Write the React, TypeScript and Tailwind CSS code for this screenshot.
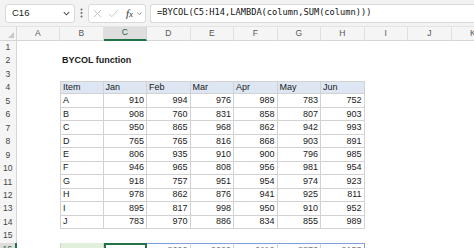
import React from 'react';

const COLS = ['A', 'B', 'C', 'D', 'E', 'F', 'G', 'H', 'I', 'J', 'K'];
const MONTHS = ['Jan', 'Feb', 'Mar', 'Apr', 'May', 'Jun'];
const DATA: [string, number[]][] = [
  ['A', [910, 994, 976, 989, 783, 752]],
  ['B', [908, 760, 831, 858, 807, 903]],
  ['C', [950, 865, 968, 862, 942, 993]],
  ['D', [765, 765, 816, 868, 903, 891]],
  ['E', [806, 935, 910, 900, 796, 985]],
  ['F', [946, 965, 808, 956, 981, 954]],
  ['G', [918, 757, 951, 954, 974, 923]],
  ['H', [978, 862, 876, 941, 925, 811]],
  ['I', [895, 817, 998, 950, 910, 952]],
  ['J', [783, 970, 886, 834, 855, 989]],
];
const TOTALS = [8859, 8690, 9020, 9112, 8876, 9153];

function FormulaBar() {
  return (
    <div className="h-[27px] bg-[#f3f3f3] flex items-center pl-[5px] border-b border-[#e3e3e3]">
      <div className="w-[70px] h-[19px] shrink-0 bg-white border border-[#dadada] rounded-[3px] flex items-center justify-between pl-[6px] pr-[3px] text-[9.5px] text-[#222] font-['Liberation_Sans',Arial,sans-serif]">
        <span>C16</span>
        <svg width="9" height="9" viewBox="0 0 10 10">
          <path d="M2 3.5 L5 6.5 L8 3.5" fill="none" stroke="#555" strokeWidth="1.2" />
        </svg>
      </div>
      <div className="w-[13px] shrink-0 flex justify-center">
        <svg width="3" height="10" viewBox="0 0 3 10">
          <circle cx="1.5" cy="1.5" r="1" fill="#666" />
          <circle cx="1.5" cy="5" r="1" fill="#666" />
          <circle cx="1.5" cy="8.5" r="1" fill="#666" />
        </svg>
      </div>
      <div className="w-[58px] h-[19px] shrink-0 bg-white border border-[#dadada] rounded-[3px] flex items-center pl-[4px] gap-[6px]">
        <svg width="9" height="9" viewBox="0 0 10 10">
          <path d="M1 1 L9 9 M9 1 L1 9" stroke="#c4c4c4" strokeWidth="1.1" />
        </svg>
        <svg width="11" height="9" viewBox="0 0 12 10">
          <path d="M1 5.5 L4.2 8.5 L11 1.2" fill="none" stroke="#c4c4c4" strokeWidth="1.1" />
        </svg>
        <span className="text-[11px] italic font-['Liberation_Serif',serif] text-[#333] leading-none ml-[1px]">
          f<span className="text-[9px]">x</span>
        </span>
        <svg width="7" height="7" viewBox="0 0 10 10" className="-ml-[3px]">
          <path d="M2 3.5 L5 6.5 L8 3.5" fill="none" stroke="#777" strokeWidth="1.2" />
        </svg>
      </div>
      <div className="ml-[4px] flex-1 h-[19px] bg-white border border-r-0 border-[#dadada] rounded-l-[3px] flex items-center pl-[6px] text-[8.7px] text-[#111] font-['DejaVu_Sans_Mono',monospace] whitespace-nowrap">
        =BYCOL(C5:H14,LAMBDA(column,SUM(column)))
      </div>
    </div>
  );
}

function HeaderRow() {
  return (
    <div className="flex h-[13.5px]">
      <div className="w-[16.5px] shrink-0 bg-[#f5f5f5] border-r border-b border-[#d6d6d6] flex items-end justify-end pr-[2px] pb-[2px]">
        <svg width="6" height="6" viewBox="0 0 6 6">
          <path d="M6 0 L6 6 L0 6 Z" fill="#c8c8c8" />
        </svg>
      </div>
      {COLS.map((c) =>
        c === 'C' ? (
          <div
            key={c}
            className="w-[43.5px] shrink-0 bg-[#dedede] border-r border-[#d6d6d6] border-b-2 border-b-[#217346] flex items-center justify-center text-[8.5px] text-[#1d5e3a] font-['Liberation_Sans',Arial,sans-serif]"
          >
            {c}
          </div>
        ) : (
          <div
            key={c}
            className="w-[43.5px] shrink-0 bg-[#f5f5f5] border-r border-b border-[#e0e0e0] border-b-[#d6d6d6] flex items-center justify-center text-[8.5px] text-[#555] font-['Liberation_Sans',Arial,sans-serif]"
          >
            {c}
          </div>
        )
      )}
    </div>
  );
}

const base = 'w-[43.5px] shrink-0 h-full flex items-center whitespace-nowrap text-[9px] leading-none';
const base16 = 'w-[43.5px] shrink-0 h-full flex items-start pt-[2px] whitespace-nowrap text-[9px] leading-none text-[#777]';

function cellFor(r: number, ci: number) {
  if (r >= 4 && r <= 14 && ci >= 1 && ci <= 7) {
    let cls = base + ' border-r border-b border-[#d2d2d2]';
    if (ci === 1) cls += ' border-l';
    if (r === 4) cls += ' border-t bg-[#dde6f2]';
    if (r === 4) {
      const label = ci === 1 ? 'Item' : MONTHS[ci - 2];
      return <div key={ci} className={cls + ' pl-[2px]'}>{label}</div>;
    }
    const row = DATA[r - 5];
    if (ci === 1) return <div key={ci} className={cls + ' pl-[2px]'}>{row[0]}</div>;
    return <div key={ci} className={cls + ' justify-end pr-[2px]'}>{row[1][ci - 2]}</div>;
  }
  if (r === 2 && ci === 1) {
    return (
      <div key={ci} className={base + ' pl-[2px] font-bold overflow-visible'}>
        BYCOL function
      </div>
    );
  }
  if (r === 16) {
    if (ci === 1) return <div key={ci} className={base16 + ' bg-[#e2efda] border-l border-r border-[#d4d4d4]'} />;
    if (ci === 2)
      return (
        <div key={ci} className={base16 + ' border-2 border-[#217346] justify-end pr-[2px]'}>
          {TOTALS[0]}
        </div>
      );
    if (ci >= 3 && ci <= 7) {
      const cls =
        ci === 7
          ? base16 + ' border-t border-b border-r border-[#7f9fd8] justify-end pr-[2px]'
          : base16 + ' border-t border-b border-r border-[#7f9fd8] border-r-[#d4d4d4] justify-end pr-[2px]';
      return <div key={ci} className={cls}>{TOTALS[ci - 2]}</div>;
    }
  }
  return <div key={ci} className={base} />;
}

function Row({ r }: { r: number }) {
  const active = r === 16;
  return (
    <div className="flex h-[13.47px] shrink-0">
      <div
        className={
          active
            ? 'w-[16.5px] shrink-0 bg-[#dedede] border-r-2 border-[#217346] flex items-start pt-[2px] justify-center text-[8.5px] leading-none text-[#1d5e3a] font-["Liberation_Sans",Arial,sans-serif]'
            : 'w-[16.5px] shrink-0 bg-[#f5f5f5] border-r border-[#d6d6d6] flex items-center justify-center text-[8.5px] text-[#444] font-["Liberation_Sans",Arial,sans-serif]'
        }
      >
        {r}
      </div>
      {COLS.map((_, ci) => cellFor(r, ci))}
    </div>
  );
}

export default function App() {
  const rows = Array.from({ length: 16 }, (_, i) => i + 1);
  return (
    <div className="w-[474px] h-[248px] overflow-hidden bg-white text-[#1a1a1a] font-['Liberation_Sans',Arial,sans-serif]">
      <FormulaBar />
      <HeaderRow />
      <div className="flex flex-col">
        {rows.map((r) => (
          <Row key={r} r={r} />
        ))}
      </div>
    </div>
  );
}
